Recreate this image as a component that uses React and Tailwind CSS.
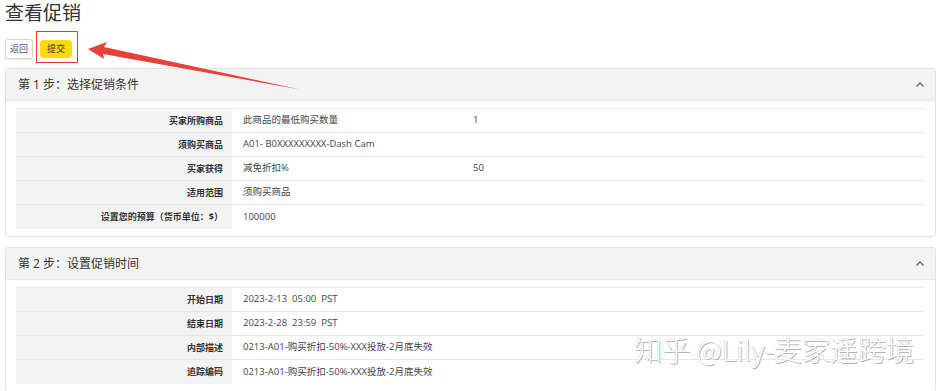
import React from "react";

const font = { fontFamily: "'Open Sans','Noto Sans CJK SC',sans-serif" };

function Chevron() {
  return (
    <svg width="10" height="7" viewBox="0 0 10 7" className="block">
      <path d="M1.5 5.5 L5 2 L8.5 5.5" fill="none" stroke="#666" strokeWidth="1.4" />
    </svg>
  );
}

function Row({ label, value, extra }) {
  return (
    <div className="grid grid-cols-[217px_240px_1fr] h-[24px] border-b border-[#e6e6e6] last:border-b-0">
      <div className="bg-[#f3f3f3] flex items-center justify-end pr-[9px] text-[9px] font-bold text-[#333] mr-[1px]">
        {label}
      </div>
      <div className="flex items-center pl-[10px] text-[9.5px] text-[#444]">{value}</div>
      <div className="flex items-center text-[9.5px] text-[#444]">{extra}</div>
    </div>
  );
}

function Panel({ title, rows, className }) {
  return (
    <div className={"mx-[5px] border border-[#e2e2e2] rounded-[3px] " + (className || "")}>
      <div className="h-[32px] bg-[#f3f3f3] border-b border-[#e6e6e6] flex items-center justify-between pl-[12px] pr-[10px] text-[12px] text-[#333]">
        <span>{title}</span>
        <Chevron />
      </div>
      <div className="pt-[7px] pb-[7px] pl-[10px] pr-[11px]">
        <div className="border-t border-[#ececec]">
          {rows.map((r, i) => (
            <Row key={i} {...r} />
          ))}
        </div>
      </div>
    </div>
  );
}

export default function App() {
  const rows1 = [
    { label: "买家所购商品", value: "此商品的最低购买数量", extra: "1" },
    { label: "须购买商品", value: "A01- B0XXXXXXXXX-Dash Cam" },
    { label: "买家获得", value: "减免折扣%", extra: "50" },
    { label: "适用范围", value: "须购买商品" },
    { label: "设置您的预算（货币单位：$）", value: "100000" },
  ];
  const rows2 = [
    { label: "开始日期", value: "2023-2-13\u00a0\u00a005:00\u00a0\u00a0PST" },
    { label: "结束日期", value: "2023-2-28\u00a0\u00a023:59\u00a0\u00a0PST" },
    { label: "内部描述", value: "0213-A01-购买折扣-50%-XXX投放-2月底失效" },
    { label: "追踪编码", value: "0213-A01-购买折扣-50%-XXX投放-2月底失效" },
  ];
  return (
    <div className="relative w-[941px] h-[391px] overflow-hidden bg-white" style={font}>
      <div className="pl-[5px] pt-[0px] h-[26px] text-[19px] leading-[26px] text-[#333]">查看促销</div>
      <div className="flex items-center gap-[7px] pl-[5px] mt-[13px] h-[20px]">
        <div className="w-[28px] h-[20px] border border-[#d5d5d5] rounded-[3px] bg-white shadow-[0_1px_1px_rgba(0,0,0,0.08)] flex items-center justify-center text-[9px] text-[#555]">
          返回
        </div>
        <div className="w-[32px] h-[18px] rounded-[4px] bg-[#ffd814] flex items-center justify-center text-[9px] text-[#333]">
          提交
        </div>
      </div>
      <Panel title="第 1 步：选择促销条件" rows={rows1} className="mt-[9px]" />
      <Panel title="第 2 步：设置促销时间" rows={rows2} className="mt-[10px]" />

      {/* annotation box */}
      <div className="absolute left-[36px] top-[31px] w-[42px] h-[32px] border-[1.5px] border-[#e53935]" />
      {/* annotation arrow */}
      <svg className="absolute left-0 top-0" width="941" height="391" viewBox="0 0 941 391">
        <polygon
          points="88,49 107,42 104,47 300,89.5 103,54 104,59"
          fill="#e8403a"
        />
      </svg>
      {/* watermark */}
      <div
        className="absolute left-[634px] top-[329px] text-[28px] leading-[40px] text-white whitespace-nowrap"
        style={{
          textShadow: "1px 1px 0 #b5b5b5, -0.5px -0.5px 0 #d0d0d0",
          fontFamily: "'Noto Sans CJK SC',sans-serif",
          fontWeight: 300,
        }}
      >
        知乎 @Lily-麦家遥跨境
      </div>
    </div>
  );
}
